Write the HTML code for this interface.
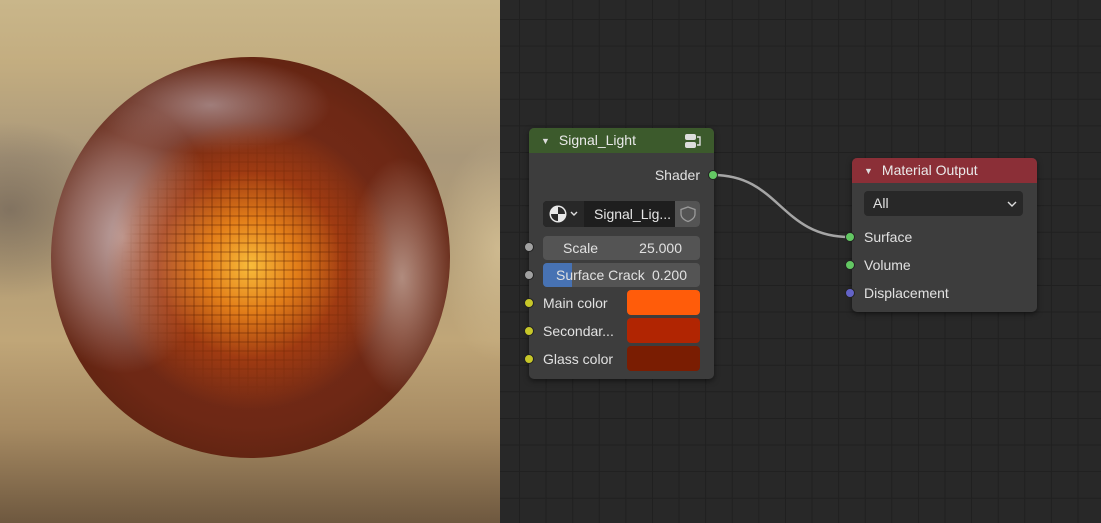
<!DOCTYPE html>
<html><head><meta charset="utf-8">
<style>
*{margin:0;padding:0;box-sizing:border-box}
body{width:1101px;height:523px;overflow:hidden;position:relative;background:#282828;font-family:"Liberation Sans",sans-serif;}
#left{position:absolute;left:0;top:0;width:500px;height:523px;overflow:hidden;
background:
radial-gradient(ellipse 90px 160px at 500px 250px, rgba(225,205,160,0.6), rgba(0,0,0,0) 70%),
radial-gradient(ellipse 140px 110px at 10px 210px, rgba(100,88,80,0.6), rgba(0,0,0,0) 80%),
linear-gradient(180deg,#c9b68a 0%,#c3ad80 12%,#aa987a 30%,#b39d76 50%,#c0a678 65%,#a68a62 82%,#6e583f 100%);}
#sphere{position:absolute;left:51px;top:57px;width:399px;height:401px;border-radius:50%;
background:
radial-gradient(circle at 50% 52%, rgba(255,195,60,0.95) 0%, rgba(245,140,25,0.85) 16%, rgba(190,70,15,0.6) 32%, rgba(0,0,0,0) 50%),
radial-gradient(ellipse 120px 170px at 18% 45%, rgba(215,205,210,0.75) 0%, rgba(190,170,170,0.45) 45%, rgba(0,0,0,0) 80%),
radial-gradient(ellipse 70px 150px at 88% 55%, rgba(220,205,195,0.6) 0%, rgba(0,0,0,0) 80%),
radial-gradient(ellipse 150px 60px at 40% 12%, rgba(200,195,205,0.55) 0%, rgba(0,0,0,0) 80%),
radial-gradient(circle at 50% 50%, #7a2e18 0%, #6e2815 60%, #55200f 85%, #42180e 100%);}
#grid{position:absolute;left:0;top:0;width:100%;height:100%;border-radius:50%;
background:repeating-linear-gradient(90deg,rgba(0,0,0,0) 0 7px,rgba(90,30,0,0.25) 7px 9px),repeating-linear-gradient(0deg,rgba(0,0,0,0) 0 7px,rgba(90,30,0,0.25) 7px 9px);
-webkit-mask:radial-gradient(circle at 50% 52%,#000 0,#000 25%,transparent 45%);mask:radial-gradient(circle at 50% 52%,#000 0,#000 25%,transparent 45%);}
#right{position:absolute;left:500px;top:0;width:601px;height:523px;background-color:#282828;
background-image:
linear-gradient(90deg,#202020 0 1px,transparent 1px),
linear-gradient(0deg,#202020 0 1px,transparent 1px);
background-size:26.6px 26.6px,26.6px 26.6px;
background-position:19px 0,0 20px;}
.node{position:absolute;background:#3d3d3d;border-radius:5px;box-shadow:0 2px 6px rgba(0,0,0,0.5);color:#e6e6e6;font-size:14px;}
.hdr{position:absolute;left:0;top:0;right:0;height:25px;border-radius:5px 5px 0 0;line-height:25px;padding-left:12px;font-size:14px;color:#eaeaea}
.tri{display:inline-block;font-size:9px;margin-right:9px;vertical-align:1px;color:#ddd}
.sock{position:absolute;width:10px;height:10px;border-radius:50%;}
.t{position:absolute;font-size:14px;color:#e1e1e1;white-space:nowrap}
.fld{position:absolute;background:#545454;border-radius:4px;height:24px;}
</style></head><body>
<div id="left"><div id="sphere"><div id="grid"></div></div></div>
<div id="right"></div>
<svg style="position:absolute;left:0;top:0" width="1101" height="523"><path d="M713 175 C 780 175, 780 237, 850 237" stroke="#a5a5a5" stroke-width="2.5" fill="none"/></svg>

<div class="node" style="left:529px;top:128px;width:185px;height:251px;">
 <div class="hdr" style="background:#3c5a2c"><span class="tri">▼</span>Signal_Light</div>
 <svg style="position:absolute;left:155px;top:4px" width="20" height="18" viewBox="0 0 20 18"><rect x="1" y="2" width="11" height="6" rx="2" fill="#ddd"/><rect x="1" y="10" width="11" height="6" rx="2" fill="#ddd"/><path d="M13 5 H16 V13 H13" stroke="#ddd" stroke-width="1.4" fill="none"/></svg>
 <div class="t" style="right:14px;top:39px">Shader</div>
 <div class="sock" style="left:179px;top:42px;background:#63c763;border:1px solid #222"></div>
 <div style="position:absolute;left:14px;top:73px;width:157px;height:26px;border-radius:4px;background:#1e1e1e;overflow:hidden">
  <div style="position:absolute;left:0;top:0;width:41px;height:26px;background:#282828"></div>
  <svg style="position:absolute;left:5px;top:3px" width="32" height="20" viewBox="0 0 32 20"><circle cx="10" cy="10" r="8.5" fill="#e8e8e8"/><path d="M10 10 V3 A7 7 0 0 1 17 10 Z M10 10 H3 A7 7 0 0 0 10 17 Z" fill="#2a2a2a"/><path d="M23 8 L26 11 L29 8" stroke="#ddd" stroke-width="1.4" fill="none"/></svg>
  <div class="t" style="left:51px;top:5px;color:#e6e6e6">Signal_Lig...</div>
  <div style="position:absolute;left:132px;top:0;width:25px;height:26px;background:#545454"></div>
  <svg style="position:absolute;left:136px;top:4px" width="18" height="18" viewBox="0 0 18 18"><path d="M9 2 L16 4.5 V9 C16 13 12 15.5 9 16.5 C6 15.5 2 13 2 9 V4.5 Z" stroke="#9a9a9a" stroke-width="1.3" fill="none"/></svg>
 </div>
 <div class="sock" style="left:-5px;top:114px;background:#a1a1a1;border:1px solid #222"></div>
 <div class="fld" style="left:14px;top:108px;width:157px;"><span class="t" style="left:20px;top:4px">Scale</span><span class="t" style="right:18px;top:4px">25.000</span></div>
 <div class="sock" style="left:-5px;top:142px;background:#a1a1a1;border:1px solid #222"></div>
 <div class="fld" style="left:14px;top:135px;width:157px;overflow:hidden"><div style="position:absolute;left:0;top:0;width:29px;height:24px;background:#4772b3"></div><span class="t" style="left:13px;top:4px">Surface Crack</span><span class="t" style="right:13px;top:4px">0.200</span></div>
 <div class="sock" style="left:-5px;top:170px;background:#c7c729;border:1px solid #222"></div>
 <div class="t" style="left:14px;top:167px">Main color</div>
 <div style="position:absolute;left:98px;top:162px;width:73px;height:25px;border-radius:4px;background:#ff5c0a"></div>
 <div class="sock" style="left:-5px;top:198px;background:#c7c729;border:1px solid #222"></div>
 <div class="t" style="left:14px;top:195px">Secondar...</div>
 <div style="position:absolute;left:98px;top:190px;width:73px;height:25px;border-radius:4px;background:#b12502"></div>
 <div class="sock" style="left:-5px;top:226px;background:#c7c729;border:1px solid #222"></div>
 <div class="t" style="left:14px;top:223px">Glass color</div>
 <div style="position:absolute;left:98px;top:218px;width:73px;height:25px;border-radius:4px;background:#7a1d02"></div>
</div>

<div class="node" style="left:852px;top:158px;width:185px;height:154px;">
 <div class="hdr" style="background:#8b2f37"><span class="tri">▼</span>Material Output</div>
 <div style="position:absolute;left:12px;top:33px;width:159px;height:25px;border-radius:4px;background:#282828"><span class="t" style="left:9px;top:4px">All</span>
 <svg style="position:absolute;right:6px;top:9px" width="10" height="8" viewBox="0 0 10 8"><path d="M1 2 L5 6 L9 2" stroke="#ddd" stroke-width="1.4" fill="none"/></svg></div>
 <div class="sock" style="left:-7px;top:74px;background:#63c763;border:1px solid #222"></div>
 <div class="t" style="left:12px;top:71px">Surface</div>
 <div class="sock" style="left:-7px;top:102px;background:#63c763;border:1px solid #222"></div>
 <div class="t" style="left:12px;top:99px">Volume</div>
 <div class="sock" style="left:-7px;top:130px;background:#6363c7;border:1px solid #222"></div>
 <div class="t" style="left:12px;top:127px">Displacement</div>
</div>
</body></html>
